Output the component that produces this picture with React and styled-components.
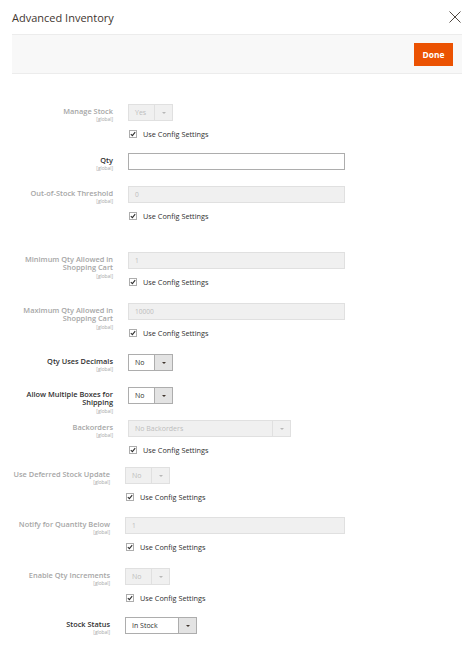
import React from 'react'
import styled, { createGlobalStyle } from 'styled-components'

const GlobalStyle = createGlobalStyle`
  body {
    margin: 0;
    background: #ffffff;
    font-family: "Open Sans", "Liberation Sans", sans-serif;
    color: #303030;
  }
`

const Modal = styled.div`
  width: 474px;
  padding: 0 12px;
  box-sizing: border-box;
`

const Header = styled.div`
  height: 34px;
  display: flex;
  align-items: center;
  justify-content: space-between;
`

const Title = styled.h1`
  margin: 0;
  font-size: 11px;
  font-weight: 400;
  color: #41362f;
`

const Close = styled.button`
  border: none;
  background: none;
  padding: 0;
  margin-right: 1px;
  width: 12px;
  height: 12px;
  display: flex;
  cursor: pointer;
`

const Toolbar = styled.div`
  height: 40px;
  box-sizing: border-box;
  background: #f8f8f8;
  border-top: 1px solid #ececec;
  border-bottom: 1px solid #ececec;
  display: flex;
  align-items: center;
  justify-content: flex-end;
  padding-right: 9px;
`

const DoneButton = styled.button`
  width: 39px;
  height: 23px;
  border: none;
  background: #eb5202;
  color: #ffffff;
  font-family: "Open Sans", sans-serif;
  font-size: 8.4px;
  font-weight: 700;
  padding: 0;
  cursor: pointer;
`

const Form = styled.div`
  padding-top: 30px;
`

const Section = styled.div`
  margin-left: ${p => p.$shift}px;
`

const Field = styled.div`
  display: flex;
  align-items: flex-start;
  margin-bottom: ${p => p.$gap}px;
`

const LabelCol = styled.div`
  width: 101px;
  flex-shrink: 0;
  height: 17px;
  padding-top: 3px;
  box-sizing: border-box;
  text-align: right;
  margin-right: 15px;
`

const LabelText = styled.div`
  font-size: 7.4px;
  line-height: 8.4px;
  font-weight: 600;
  white-space: pre-line;
  color: ${p => (p.$active ? '#303030' : '#a6a6a6')};
`

const Scope = styled.div`
  margin-top: 1px;
  font-size: 4.8px;
  line-height: 6px;
  color: #a6a6a6;
`

const ControlCol = styled.div`
  display: flex;
  flex-direction: column;
  align-items: flex-start;
`

const TextInput = styled.div`
  width: ${p => p.$width}px;
  height: 17px;
  box-sizing: border-box;
  border: 1px solid ${p => (p.$disabled ? '#e0e0e0' : '#adadad')};
  background: ${p => (p.$disabled ? '#f0f0f0' : '#ffffff')};
  font-size: 6.6px;
  color: #bdbdbd;
  display: flex;
  align-items: center;
  padding-left: 6px;
`

const Select = styled.div`
  width: ${p => p.$width}px;
  height: 17px;
  box-sizing: border-box;
  border: 1px solid ${p => (p.$disabled ? '#e0e0e0' : '#adadad')};
  background: ${p => (p.$disabled ? '#f0f0f0' : '#ffffff')};
  display: flex;
`

const SelectValue = styled.div`
  flex: 1;
  display: flex;
  align-items: center;
  padding-left: 6px;
  font-size: 7px;
  color: ${p => (p.$disabled ? '#bdbdbd' : '#303030')};
`

const SelectArrow = styled.div`
  width: 17px;
  border-left: 1px solid ${p => (p.$disabled ? '#e0e0e0' : '#adadad')};
  background: ${p => (p.$disabled ? '#f0f0f0' : '#e3e3e3')};
  display: flex;
  align-items: center;
  justify-content: center;

  &::after {
    content: '';
    border-left: 2px solid transparent;
    border-right: 2px solid transparent;
    border-top: 2.5px solid ${p => (p.$disabled ? '#b8b8b8' : '#41362f')};
  }
`

const CheckRow = styled.label`
  margin-top: 8px;
  height: 10px;
  display: flex;
  align-items: center;
  gap: 6px;
  margin-left: 1px;
  font-size: 7.3px;
  color: #303030;
`

const Box = styled.span`
  width: 8px;
  height: 8px;
  box-sizing: border-box;
  border: 1px solid #adadad;
  background: #ffffff;
  display: flex;
  align-items: center;
  justify-content: center;
`

const Checkbox = () => (
  <CheckRow>
    <Box>
      <svg width="6" height="6" viewBox="0 0 6 6">
        <path d="M0.8 3.1 L2.4 4.6 L5.2 1.2" fill="none" stroke="#303030" strokeWidth="1.1" />
      </svg>
    </Box>
    Use Config Settings
  </CheckRow>
)

const Label = ({ text, active }) => (
  <LabelCol>
    <LabelText $active={active}>{text}</LabelText>
    <Scope>[global]</Scope>
  </LabelCol>
)

const Control = ({ field }) => {
  if (field.type === 'select') {
    return (
      <Select $width={field.width} $disabled={field.disabled}>
        <SelectValue $disabled={field.disabled}>{field.value}</SelectValue>
        <SelectArrow $disabled={field.disabled} />
      </Select>
    )
  }
  return (
    <TextInput $width={field.width} $disabled={field.disabled}>{field.value}</TextInput>
  )
}

const upperFields = [
  { label: 'Manage Stock', type: 'select', value: 'Yes', width: 45, disabled: true, config: true, gap: 14 },
  { label: 'Qty', active: true, type: 'input', value: '', width: 217, gap: 16 },
  { label: 'Out-of-Stock Threshold', type: 'input', value: '0', width: 217, disabled: true, config: true, gap: 31 },
  { label: 'Minimum Qty Allowed in\nShopping Cart', type: 'input', value: '1', width: 217, disabled: true, config: true, gap: 16 },
  { label: 'Maximum Qty Allowed in\nShopping Cart', type: 'input', value: '10000', width: 217, disabled: true, config: true, gap: 16 },
  { label: 'Qty Uses Decimals', active: true, type: 'select', value: 'No', width: 45, gap: 16 },
  { label: 'Allow Multiple Boxes for\nShipping', active: true, type: 'select', value: 'No', width: 45, gap: 16 },
  { label: 'Backorders', type: 'select', value: 'No Backorders', width: 163, disabled: true, config: true, gap: 12 },
]

const lowerFields = [
  { label: 'Use Deferred Stock Update', type: 'select', value: 'No', width: 45, disabled: true, config: true, gap: 15 },
  { label: 'Notify for Quantity Below', type: 'input', value: '1', width: 220, disabled: true, config: true, gap: 16 },
  { label: 'Enable Qty Increments', type: 'select', value: 'No', width: 45, disabled: true, config: true, gap: 14 },
  { label: 'Stock Status', active: true, type: 'select', value: 'In Stock', width: 72, gap: 16 },
]

const FieldList = ({ fields }) =>
  fields.map(field => (
    <Field key={field.label} $gap={field.gap}>
      <Label text={field.label} active={field.active} />
      <ControlCol>
        <Control field={field} />
        {field.config && <Checkbox />}
      </ControlCol>
    </Field>
  ))

const App = () => {
  return (
    <Modal>
      <GlobalStyle />
      <Header>
        <Title>Advanced Inventory</Title>
        <Close aria-label="Close">
          <svg width="12" height="12" viewBox="0 0 12 12">
            <path d="M0.5 0.5 L11.5 11.5 M11.5 0.5 L0.5 11.5" stroke="#514943" strokeWidth="1" />
          </svg>
        </Close>
      </Header>
      <Toolbar>
        <DoneButton>Done</DoneButton>
      </Toolbar>
      <Form>
        <Section $shift={0}>
          <FieldList fields={upperFields} />
        </Section>
        <Section $shift={-3}>
          <FieldList fields={lowerFields} />
        </Section>
      </Form>
    </Modal>
  )
}

export default App
